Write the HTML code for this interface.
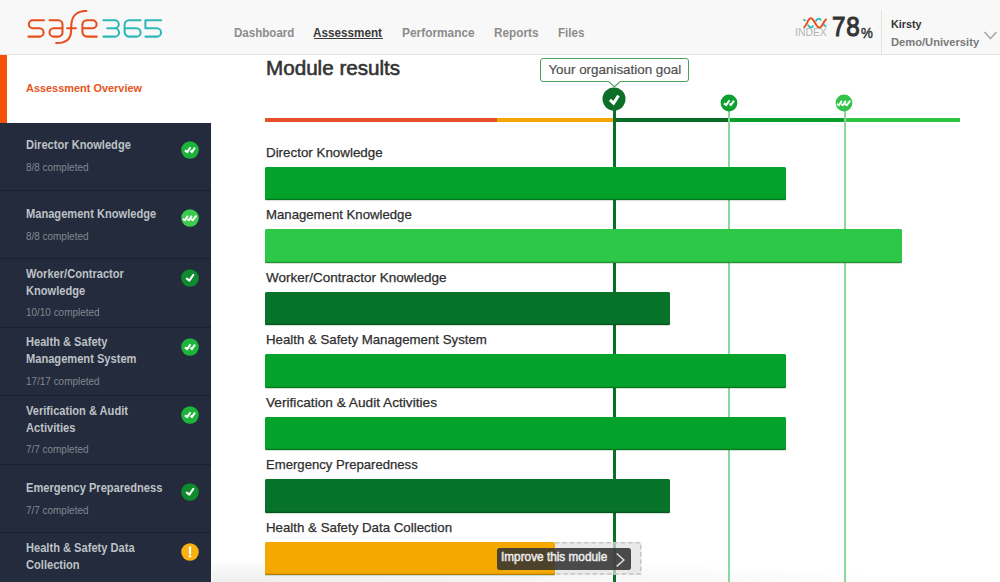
<!DOCTYPE html>
<html><head><meta charset="utf-8">
<style>
*{margin:0;padding:0;box-sizing:border-box}
html,body{width:1000px;height:582px;overflow:hidden;background:#fff;font-family:"Liberation Sans",sans-serif}
.t{position:absolute;white-space:nowrap;line-height:1}
.a{position:absolute}
</style></head>
<body>
<div class="a" style="left:0;top:0;width:1000px;height:54px;background:#f8f8f8"></div>
<div class="a" style="left:0;top:54px;width:1000px;height:1px;background:#e4e4e4"></div>
<svg class="a" style="left:0;top:0" width="200" height="54" viewBox="0 0 200 54">
<g fill="none" stroke-width="2.05" stroke-linecap="round" stroke-linejoin="round">
<g stroke="#e84d1c">
<path d="M44,20.2 H32.8 A4,4 0 0 0 32.8,28.2 H39.4 A4.2,4.2 0 0 1 39.4,36.6 H28.4"/>
<path d="M49.5,20.2 H58.3 A4.2,4.2 0 0 1 62.5,24.4 V32.4 A4.2,4.2 0 0 1 58.3,36.6 H53.7 A4.2,4.2 0 0 1 53.7,28.2 H62.5"/>
<path d="M86.4,11 C77,10.8 72,16 71.4,24 L71,32 C70.5,39.5 65,43.2 56.2,43"/>
<path d="M67.2,28.2 H76"/>
<path d="M96.8,36.6 H87 A4.6,4.6 0 0 1 82.4,32 V24.8 A4.6,4.6 0 0 1 87,20.2 H92.6 A4,4 0 0 1 92.6,28.2 H82.6"/>
</g>
<g stroke="#2bb8b6">
<path d="M103.4,20.2 H114.8 A4,4 0 0 1 114.8,28.2 H107.2 M114.8,28.2 A4.2,4.2 0 0 1 114.8,36.6 H103.4"/>
<path d="M140.6,20.2 H129.2 A4.6,4.6 0 0 0 124.6,24.8 V32 A4.6,4.6 0 0 0 129.2,36.6 H136.4 A4.2,4.2 0 0 0 136.4,28.2 H124.8"/>
<path d="M161.2,20.2 H145.4 V28.2 H156.8 A4.2,4.2 0 0 1 156.8,36.6 H145.4"/>
</g></g></svg>
<div class="t" style="left:233.50px;top:25.70px;font-size:13px;color:#8c8c8c;font-weight:bold;transform:scaleX(0.89);transform-origin:0 0;">Dashboard</div>
<div class="t" style="left:313.00px;top:25.70px;font-size:13px;color:#3a3a3a;font-weight:bold;transform:scaleX(0.9);transform-origin:0 0;">Assessment</div>
<div class="a" style="left:313.5px;top:38px;width:69px;height:1.4px;background:#3a3a3a"></div>
<div class="t" style="left:401.50px;top:25.70px;font-size:13px;color:#8c8c8c;font-weight:bold;transform:scaleX(0.915);transform-origin:0 0;">Performance</div>
<div class="t" style="left:494.00px;top:25.70px;font-size:13px;color:#8c8c8c;font-weight:bold;transform:scaleX(0.905);transform-origin:0 0;">Reports</div>
<div class="t" style="left:558.00px;top:25.70px;font-size:13px;color:#8c8c8c;font-weight:bold;transform:scaleX(0.89);transform-origin:0 0;">Files</div>
<svg class="a" style="left:790px;top:10px" width="45" height="30" viewBox="790 10 45 30">
<path d="M803.3,19.6 C806.4,19.6 807.8,27.5 811,27.5 C814.2,27.5 815.4,18.6 818.6,18.6 C821.7,18.6 823,26.4 826.4,26.6" fill="none" stroke="#2bb8b6" stroke-width="1.9" stroke-dasharray="2.6 4.4 7.6 4.6 7.4 4.6 8"/>
<path d="M803.4,27.3 C806.5,27.3 807.6,18.3 810.7,18.3 C814,18.3 816.4,27.8 819.4,27.8 C822.4,27.8 823.8,19.4 826.8,19.2" fill="none" stroke="#e84d1c" stroke-width="2"/>
</svg>
<div class="t" style="left:794.90px;top:26.62px;font-size:11.2px;color:#b4b4b4;font-weight:normal;transform:scaleX(0.93);transform-origin:0 0;">INDEX</div>
<div class="t" style="left:831.50px;top:12.17px;font-size:28.5px;color:#333;font-weight:normal;transform:scaleX(0.85);transform-origin:0 0;letter-spacing:1px;-webkit-text-stroke:1.1px #333;">78</div>
<div class="t" style="left:861.40px;top:25.63px;font-size:14.5px;color:#3a3a3a;font-weight:normal;transform:scaleX(0.92);transform-origin:0 0;-webkit-text-stroke:0.5px #3a3a3a;">%</div>
<div class="a" style="left:880.5px;top:10px;width:1px;height:44px;background:#e3e3e3"></div>
<div class="t" style="left:890.50px;top:19.09px;font-size:11px;color:#333;font-weight:bold;transform:scaleX(0.98);transform-origin:0 0;">Kirsty</div>
<div class="t" style="left:890.50px;top:37.09px;font-size:11px;color:#7a7a7a;font-weight:bold;transform:scaleX(1.015);transform-origin:0 0;">Demo/University</div>
<svg class="a" style="left:982px;top:29px" width="18" height="14"><path d="M2.5,3 L8.5,9.5 L14.5,3" fill="none" stroke="#aaa" stroke-width="1.6"/></svg>
<div class="a" style="left:0;top:55px;width:211px;height:68px;background:#fff"></div>
<div class="a" style="left:0;top:55px;width:6.5px;height:68px;background:#f4500a"></div>
<div class="t" style="left:25.50px;top:82.30px;font-size:11.7px;color:#e85420;font-weight:bold;transform:scaleX(0.935);transform-origin:0 0;">Assessment Overview</div>
<div class="a" style="left:0;top:122.7px;width:211.1px;height:460px;background:#232b3c"></div>
<div class="t" style="left:25.60px;top:139.24px;font-size:12px;color:#bec1c6;font-weight:bold;transform:scaleX(0.925);transform-origin:0 0;">Director Knowledge</div>
<div class="t" style="left:25.60px;top:162.21px;font-size:10.5px;color:#838891;font-weight:normal;transform:scaleX(0.947);transform-origin:0 0;">8/8 completed</div>
<svg class="a" style="left:180.3px;top:139.5px" width="20" height="20" viewBox="-10 -10 20 20"><circle r="8.8" fill="#1db43b"/><path d="M-5.1,0.4 L-2.8,2.1 L0.5,-2.7 M0.5,0.8 L1.9,2.1 L5,-2.4" fill="none" stroke="#fff" stroke-width="2" stroke-linecap="butt" stroke-linejoin="miter"/></svg>
<div class="a" style="left:0;top:189.5px;width:211px;height:1px;background:#1a2030"></div>
<div class="t" style="left:25.60px;top:207.74px;font-size:12px;color:#bec1c6;font-weight:bold;transform:scaleX(0.925);transform-origin:0 0;">Management Knowledge</div>
<div class="t" style="left:25.60px;top:230.71px;font-size:10.5px;color:#838891;font-weight:normal;transform:scaleX(0.947);transform-origin:0 0;">8/8 completed</div>
<svg class="a" style="left:180.3px;top:208.0px" width="20" height="20" viewBox="-10 -10 20 20"><circle r="8.8" fill="#3ccb4e"/><path d="M-7,0.9 L-5.1,2.2 L-2.2,-2.2 M-2.9,1 L-1.1,2.2 L1.8,-2.2 M1,1 L2.8,2.2 L6.3,-2.3" fill="none" stroke="#fff" stroke-width="1.9" stroke-linecap="butt" stroke-linejoin="miter"/></svg>
<div class="a" style="left:0;top:258.0px;width:211px;height:1px;background:#1a2030"></div>
<div class="t" style="left:25.60px;top:267.84px;font-size:12px;color:#bec1c6;font-weight:bold;transform:scaleX(0.925);transform-origin:0 0;">Worker/Contractor</div>
<div class="t" style="left:25.60px;top:284.54px;font-size:12px;color:#bec1c6;font-weight:bold;transform:scaleX(0.925);transform-origin:0 0;">Knowledge</div>
<div class="t" style="left:25.60px;top:307.01px;font-size:10.5px;color:#838891;font-weight:normal;transform:scaleX(0.947);transform-origin:0 0;">10/10 completed</div>
<svg class="a" style="left:180.3px;top:268.1px" width="20" height="20" viewBox="-10 -10 20 20"><circle r="8.8" fill="#0f8a2f"/><path d="M-3.2,0.6 L-0.6,2.6 L3.3,-3.1" fill="none" stroke="#fff" stroke-width="2" stroke-linecap="round" stroke-linejoin="round"/></svg>
<div class="a" style="left:0;top:326.5px;width:211px;height:1px;background:#1a2030"></div>
<div class="t" style="left:25.60px;top:336.34px;font-size:12px;color:#bec1c6;font-weight:bold;transform:scaleX(0.925);transform-origin:0 0;">Health &amp; Safety</div>
<div class="t" style="left:25.60px;top:353.04px;font-size:12px;color:#bec1c6;font-weight:bold;transform:scaleX(0.925);transform-origin:0 0;">Management System</div>
<div class="t" style="left:25.60px;top:375.51px;font-size:10.5px;color:#838891;font-weight:normal;transform:scaleX(0.947);transform-origin:0 0;">17/17 completed</div>
<svg class="a" style="left:180.3px;top:336.6px" width="20" height="20" viewBox="-10 -10 20 20"><circle r="8.8" fill="#1db43b"/><path d="M-5.1,0.4 L-2.8,2.1 L0.5,-2.7 M0.5,0.8 L1.9,2.1 L5,-2.4" fill="none" stroke="#fff" stroke-width="2" stroke-linecap="butt" stroke-linejoin="miter"/></svg>
<div class="a" style="left:0;top:395.0px;width:211px;height:1px;background:#1a2030"></div>
<div class="t" style="left:25.60px;top:404.84px;font-size:12px;color:#bec1c6;font-weight:bold;transform:scaleX(0.925);transform-origin:0 0;">Verification &amp; Audit</div>
<div class="t" style="left:25.60px;top:421.54px;font-size:12px;color:#bec1c6;font-weight:bold;transform:scaleX(0.925);transform-origin:0 0;">Activities</div>
<div class="t" style="left:25.60px;top:444.01px;font-size:10.5px;color:#838891;font-weight:normal;transform:scaleX(0.947);transform-origin:0 0;">7/7 completed</div>
<svg class="a" style="left:180.3px;top:405.1px" width="20" height="20" viewBox="-10 -10 20 20"><circle r="8.8" fill="#1db43b"/><path d="M-5.1,0.4 L-2.8,2.1 L0.5,-2.7 M0.5,0.8 L1.9,2.1 L5,-2.4" fill="none" stroke="#fff" stroke-width="2" stroke-linecap="butt" stroke-linejoin="miter"/></svg>
<div class="a" style="left:0;top:463.5px;width:211px;height:1px;background:#1a2030"></div>
<div class="t" style="left:25.60px;top:481.74px;font-size:12px;color:#bec1c6;font-weight:bold;transform:scaleX(0.925);transform-origin:0 0;">Emergency Preparedness</div>
<div class="t" style="left:25.60px;top:504.71px;font-size:10.5px;color:#838891;font-weight:normal;transform:scaleX(0.947);transform-origin:0 0;">7/7 completed</div>
<svg class="a" style="left:180.3px;top:482.0px" width="20" height="20" viewBox="-10 -10 20 20"><circle r="8.8" fill="#0f8a2f"/><path d="M-3.2,0.6 L-0.6,2.6 L3.3,-3.1" fill="none" stroke="#fff" stroke-width="2" stroke-linecap="round" stroke-linejoin="round"/></svg>
<div class="a" style="left:0;top:532.0px;width:211px;height:1px;background:#1a2030"></div>
<div class="t" style="left:25.60px;top:541.84px;font-size:12px;color:#bec1c6;font-weight:bold;transform:scaleX(0.925);transform-origin:0 0;">Health &amp; Safety Data</div>
<div class="t" style="left:25.60px;top:558.54px;font-size:12px;color:#bec1c6;font-weight:bold;transform:scaleX(0.925);transform-origin:0 0;">Collection</div>
<div class="t" style="left:25.60px;top:581.01px;font-size:10.5px;color:#838891;font-weight:normal;transform:scaleX(0.947);transform-origin:0 0;">6/9 completed</div>
<svg class="a" style="left:180.3px;top:542.1px" width="20" height="20" viewBox="-10 -10 20 20"><circle r="8.8" fill="#f8b10e"/><path d="M0,-4.6 V1.4" stroke="#fff" stroke-width="2.2" stroke-linecap="round"/><circle cx="0" cy="4.2" r="1.2" fill="#fff"/></svg>
<div class="a" style="left:211px;top:560px;width:789px;height:22px;background:radial-gradient(ellipse 640px 24px at 8% 100%, rgba(0,0,0,.065), rgba(0,0,0,0))"></div>
<div class="a" style="left:211px;top:123px;width:1px;height:459px;background:#f7f7f7"></div>
<div class="t" style="left:266.00px;top:58.99px;font-size:19.5px;color:#333;font-weight:normal;transform:scaleX(1.058);transform-origin:0 0;-webkit-text-stroke:0.55px #333;">Module results</div>
<div class="a" style="left:265px;top:118px;width:232px;height:4px;background:#e8502a"></div>
<div class="a" style="left:497px;top:118px;width:117px;height:4px;background:#f5a500"></div>
<div class="a" style="left:614px;top:118px;width:114.5px;height:4px;background:#0a6b27"></div>
<div class="a" style="left:728.5px;top:118px;width:116px;height:4px;background:#0a9e2c"></div>
<div class="a" style="left:844.5px;top:118px;width:115.5px;height:4px;background:#2ec245"></div>
<div class="a" style="left:728px;top:102px;width:1.7px;height:480px;background:#8ad89a"></div>
<div class="a" style="left:843.9px;top:102px;width:1.7px;height:480px;background:#8ad89a"></div>
<div class="a" style="left:613.1px;top:99px;width:2.7px;height:483px;background:#0c6e29"></div>
<div class="t" style="left:266.00px;top:145.57px;font-size:13.5px;color:#2e2e2e;font-weight:normal;transform:scaleX(0.99);transform-origin:0 0;-webkit-text-stroke:0.25px #2e2e2e;">Director Knowledge</div>
<div class="a" style="left:265px;top:166.8px;width:521px;height:33.4px;background:#03a22a;border-radius:1.5px;box-shadow:inset 0 -1.2px 0 rgba(0,0,0,.25), 0 0.6px 0.8px rgba(0,80,0,.18)"></div>
<div class="t" style="left:266.00px;top:208.07px;font-size:13.5px;color:#2e2e2e;font-weight:normal;transform:scaleX(0.976);transform-origin:0 0;-webkit-text-stroke:0.25px #2e2e2e;">Management Knowledge</div>
<div class="a" style="left:265px;top:229.3px;width:637px;height:33.4px;background:#2ec848;border-radius:1.5px;box-shadow:inset 0 -1.2px 0 rgba(0,0,0,.25), 0 0.6px 0.8px rgba(0,80,0,.18)"></div>
<div class="t" style="left:266.00px;top:270.57px;font-size:13.5px;color:#2e2e2e;font-weight:normal;-webkit-text-stroke:0.25px #2e2e2e;">Worker/Contractor Knowledge</div>
<div class="a" style="left:265px;top:291.8px;width:405px;height:33.4px;background:#06722a;border-radius:1.5px;box-shadow:inset 0 -1.2px 0 rgba(0,0,0,.25), 0 0.6px 0.8px rgba(0,80,0,.18)"></div>
<div class="t" style="left:266.00px;top:333.07px;font-size:13.5px;color:#2e2e2e;font-weight:normal;transform:scaleX(0.981);transform-origin:0 0;-webkit-text-stroke:0.25px #2e2e2e;">Health &amp; Safety Management System</div>
<div class="a" style="left:265px;top:354.3px;width:521px;height:33.4px;background:#03a22a;border-radius:1.5px;box-shadow:inset 0 -1.2px 0 rgba(0,0,0,.25), 0 0.6px 0.8px rgba(0,80,0,.18)"></div>
<div class="t" style="left:266.00px;top:395.57px;font-size:13.5px;color:#2e2e2e;font-weight:normal;transform:scaleX(1.013);transform-origin:0 0;-webkit-text-stroke:0.25px #2e2e2e;">Verification &amp; Audit Activities</div>
<div class="a" style="left:265px;top:416.8px;width:521px;height:33.4px;background:#03a22a;border-radius:1.5px;box-shadow:inset 0 -1.2px 0 rgba(0,0,0,.25), 0 0.6px 0.8px rgba(0,80,0,.18)"></div>
<div class="t" style="left:266.00px;top:458.07px;font-size:13.5px;color:#2e2e2e;font-weight:normal;transform:scaleX(0.972);transform-origin:0 0;-webkit-text-stroke:0.25px #2e2e2e;">Emergency Preparedness</div>
<div class="a" style="left:265px;top:479.3px;width:405px;height:33.4px;background:#06722a;border-radius:1.5px;box-shadow:inset 0 -1.2px 0 rgba(0,0,0,.25), 0 0.6px 0.8px rgba(0,80,0,.18)"></div>
<div class="t" style="left:266.00px;top:520.57px;font-size:13.5px;color:#2e2e2e;font-weight:normal;transform:scaleX(0.984);transform-origin:0 0;-webkit-text-stroke:0.25px #2e2e2e;">Health &amp; Safety Data Collection</div>
<div class="a" style="left:265px;top:541.8px;width:290px;height:33.4px;background:#f5a800;border-radius:1.5px;box-shadow:inset 0 -1.2px 0 rgba(0,0,0,.25), 0 0.6px 0.8px rgba(0,80,0,.18)"></div>
<svg class="a" style="left:554.8px;top:542.4px" width="88" height="34" viewBox="0 0 88 34"><rect x="0" y="0" width="86.4" height="32.8" fill="rgba(226,226,226,.72)"/><path d="M0,0.75 H85.65 V32.05 H0" fill="none" stroke="#c4c4c4" stroke-width="1.5" stroke-dasharray="4.5 2.8"/></svg>
<svg class="a" style="left:599.4px;top:83.6px" width="30" height="30" viewBox="-15 -15 30 30"><circle r="11.5" fill="#0c6e29"/><path d="M-4.1,0.9 L-0.4,4.2 L4.5,-3.4" fill="none" stroke="#fff" stroke-width="3" stroke-linecap="butt" stroke-linejoin="miter"/></svg>
<svg class="a" style="left:718.6px;top:92.6px" width="20" height="20" viewBox="-10 -10 20 20"><circle r="8.4" fill="#0ca02e"/><path d="M-5.1,0.4 L-2.8,2.1 L0.5,-2.7 M0.5,0.8 L1.9,2.1 L5,-2.4" fill="none" stroke="#fff" stroke-width="2" stroke-linecap="butt" stroke-linejoin="miter"/></svg>
<svg class="a" style="left:834.1px;top:92.6px" width="20" height="20" viewBox="-10 -10 20 20"><circle r="8.4" fill="#33c24a"/><path d="M-7,0.9 L-5.1,2.2 L-2.2,-2.2 M-2.9,1 L-1.1,2.2 L1.8,-2.2 M1,1 L2.8,2.2 L6.3,-2.3" fill="none" stroke="#fff" stroke-width="1.9" stroke-linecap="butt" stroke-linejoin="miter"/></svg>
<div class="a" style="left:540.2px;top:58.2px;width:148.5px;height:23.6px;border:1.2px solid #4f9f60;border-radius:3px;background:#fff"></div>
<svg class="a" style="left:606px;top:80px" width="17" height="9" viewBox="0 0 17 9"><path d="M2.7,1.6 L8.4,6.8 L14.1,1.6" fill="#fff" stroke="#4f9f60" stroke-width="1.2"/><rect x="3.3" y="0" width="10.2" height="1.9" fill="#fff"/></svg>
<div class="t" style="left:548.40px;top:63.06px;font-size:13.4px;color:#505050;font-weight:normal;-webkit-text-stroke:0.2px #505050;">Your organisation goal</div>
<div class="a" style="left:496.7px;top:547.9px;width:134.8px;height:22px;border-radius:2.5px;background:rgba(48,48,48,.86)"></div>
<div class="t" style="left:500.90px;top:550.85px;font-size:12.7px;color:#ececec;font-weight:normal;transform:scaleX(0.93);transform-origin:0 0;-webkit-text-stroke:0.5px #ececec;">Improve this module</div>
<svg class="a" style="left:612px;top:550px" width="16" height="20" viewBox="612 550 16 20"><path d="M616.7,553.5 L623.9,560 L616.7,566.4" fill="none" stroke="#dcdcdc" stroke-width="1.5"/></svg>
</body></html>
